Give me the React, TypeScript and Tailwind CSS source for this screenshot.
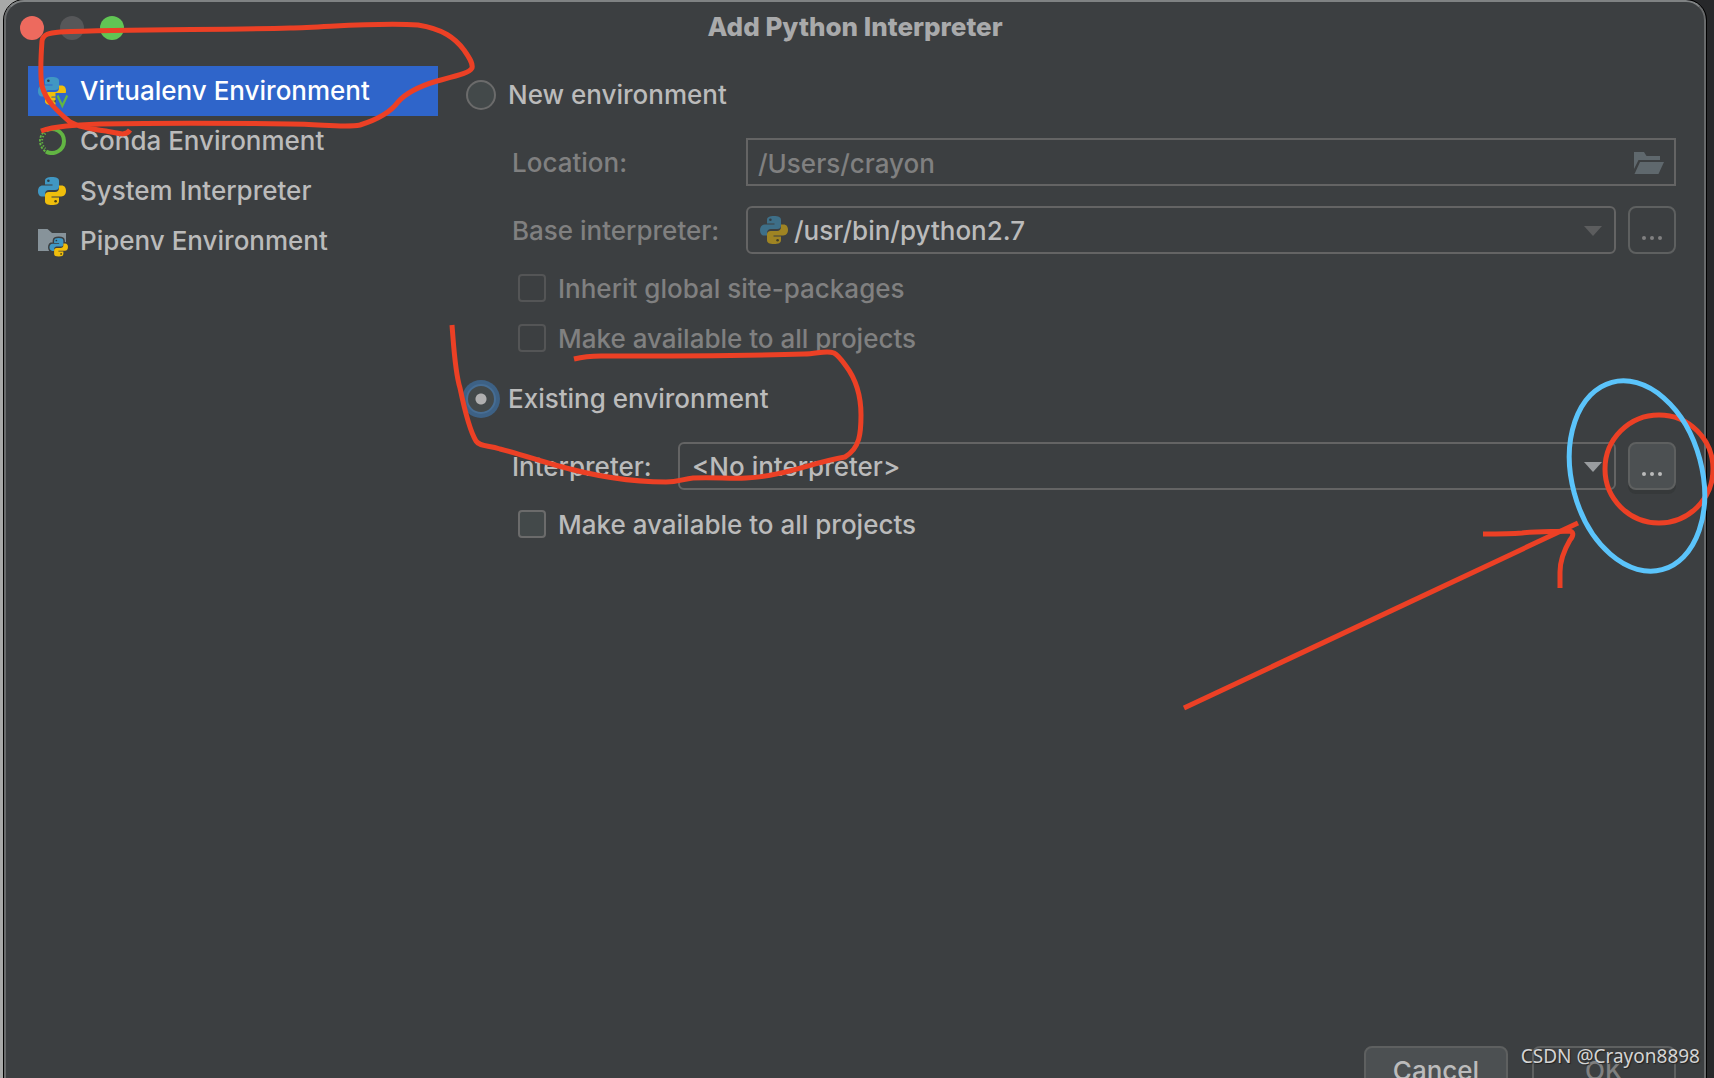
import type { ReactNode } from "react";

const BLUE_HALF =
  "M14 0C9.5 0 7 1 7 4V7.5H14.5V8.6H4.8C1.6 8.6 0 11 0 14.2S1.6 19.6 4.4 19.6H7V17C7 14.2 8.6 13 11 13H17.2C19.6 13 21 11.6 21 9.4V4C21 1 18.5 0 14 0Z";

function PythonShape() {
  return (
    <>
      <path d={BLUE_HALF} fill="#4097c3" />
      <path d={BLUE_HALF} fill="#f0be0c" transform="rotate(180 14 14)" />
      <circle cx="10.4" cy="3.8" r="1.3" fill="#2b3d48" />
      <circle cx="17.6" cy="24.2" r="1.3" fill="#4a3f12" />
    </>
  );
}

function PythonIcon({ className = "" }: { className?: string }) {
  return (
    <svg viewBox="0 0 28 28" className={`size-7 shrink-0 ${className}`} aria-hidden="true">
      <PythonShape />
    </svg>
  );
}

function VirtualenvIcon() {
  return (
    <svg viewBox="0 0 28 28" className="size-7 shrink-0 overflow-visible" aria-hidden="true">
      <PythonShape />
      <path d="M17.5 16H30V31H17.5Z" fill="#2f65ca" />
      <path d="M13.5 20.5H17M13.5 24H17" stroke="#9a8a3a" strokeWidth="1" />
      <path d="M19.5 18.5L24.3 29L29.2 18.5" fill="none" stroke="#62b543" strokeWidth="2.2" />
    </svg>
  );
}

function CondaIcon() {
  return (
    <svg viewBox="0 0 28 28" className="size-7 shrink-0" aria-hidden="true">
      <path d="M8 3.6A12 12 0 1 1 8 24.4" fill="none" stroke="#62b543" strokeWidth="4" />
      <path d="M8.5 3A12.5 12.5 0 0 0 8.5 25" fill="none" stroke="#62b543" strokeWidth="1.8" strokeDasharray="2.4 1.4" />
      <path d="M7.5 6.5A10 10 0 0 0 7.5 21.5" fill="none" stroke="#62b543" strokeWidth="1.8" strokeDasharray="1.4 1.8" />
    </svg>
  );
}

function PipenvIcon() {
  return (
    <svg viewBox="0 0 28 28" className="size-7 shrink-0 overflow-visible" aria-hidden="true">
      <path d="M0 2H9.5L14 6H28V24H0Z" fill="#87939a" />
      <g transform="translate(11.5 11) scale(.66)">
        <path d={BLUE_HALF} fill="#3c3f41" stroke="#3c3f41" strokeWidth="4.5" />
        <path d={BLUE_HALF} fill="#3c3f41" stroke="#3c3f41" strokeWidth="4.5" transform="rotate(180 14 14)" />
        <PythonShape />
      </g>
    </svg>
  );
}

function FolderIcon() {
  return (
    <svg viewBox="0 0 30 22" className="h-[22px] w-[30px]" fill="#5f686d" aria-hidden="true">
      <path d="M0 0H10L12.5 4H26V8H4.5L0 17Z" />
      <path d="M6 10H30L24.5 22H0.5Z" />
    </svg>
  );
}

function Arrow({ className }: { className: string }) {
  return (
    <svg
      viewBox="0 0 18 10"
      className={`pointer-events-none absolute top-5 right-3.5 h-2.5 w-[18px] ${className}`}
      aria-hidden="true"
    >
      <path d="M0 0H18L9 10Z" fill="currentColor" />
    </svg>
  );
}

function Dots() {
  return (
    <svg viewBox="0 0 20 4" className="mt-4 h-1 w-5" fill="currentColor" aria-hidden="true">
      <circle cx="2" cy="2" r="2" />
      <circle cx="10" cy="2" r="2" />
      <circle cx="18" cy="2" r="2" />
    </svg>
  );
}

function NavItem({ icon, label, selected = false }: { icon: ReactNode; label: string; selected?: boolean }) {
  return (
    <li>
      <button
        type="button"
        className={`flex h-[50px] w-full items-center gap-3.5 px-2.5 text-left ${selected ? "bg-[#2f65ca] text-white" : "text-[#bbbbbb]"}`}
      >
        {icon}
        {label}
      </button>
    </li>
  );
}

function CheckRow({ id, label, disabled = false }: { id: string; label: string; disabled?: boolean }) {
  return (
    <div className={`flex h-[50px] items-center gap-3 pl-[52px] ${disabled ? "text-[#808080]" : ""}`}>
      <input
        id={id}
        type="checkbox"
        disabled={disabled}
        className="size-7 shrink-0 appearance-none rounded border-2 border-[#6b6b6b] bg-[#43494a] disabled:border-[#545556] disabled:bg-transparent"
      />
      <label htmlFor={id} className="pt-0.5">{label}</label>
    </div>
  );
}

function Annotations() {
  return (
    <>
      <svg className="pointer-events-none absolute top-0 left-0 h-[500px] w-[900px]" fill="none" stroke="#ec4025" strokeWidth="5" aria-hidden="true">
        <path d="M130 130C126 136 121 134 106 131C90 129 79 127 70 122C57 111 46 101 42 86C40 75 41 55 42 41C43 34 49 33 60 32C130 29 220 30 290 28C330 27 380 22 418 25C443 29 455 38 464 50C471 60 473 64 472 68C469 73 460 75 437 81C417 87 405 94 398 102C390 113 376 120 360 125C345 128 320 124 290 124C230 123 150 123 100 124C75 125 55 126 41 131" />
        <path d="M452 325C454 350 455 372 460 388C465 412 470 431 476 441C480 447 488 445 500 449C520 454 540 461 555 465C590 475 625 482 666 482C678 482 683 479 693 478C715 477 730 479 746 478C785 476 810 463 845 457C860 448 861 433 861 415C861 395 855 378 846 366C841 359 838 355 834 353C826 350 817 354 804 354C740 356 670 356 601 356C590 356 582 357 574 359" />
      </svg>
      <svg className="pointer-events-none absolute top-0 right-0 h-[720px] w-[564px]" fill="none" stroke="#ec4025" strokeWidth="5" aria-hidden="true">
        <path d="M34 708L428 523" />
        <path d="M333 534C350 534 360 534 372 533C390 531 405 532 418 531C424 531 424 535 420 540C413 552 410 563 410 572V588" />
        <circle cx="509" cy="469" r="54" />
        <ellipse cx="487" cy="476" rx="97" ry="65" transform="rotate(75 487 476)" stroke="#5bc4fb" />
      </svg>
    </>
  );
}

export default function App() {
  return (
    <div className="relative h-screen overflow-hidden bg-linear-to-r from-[#a8a9a8] from-50% to-[#27282a] to-50% pr-2 pl-1 font-[Inter,'Liberation_Sans',sans-serif] text-[26px] leading-8 font-medium text-[#bbbbbb]">
      <main className="flex h-[calc(100vh+40px)] flex-col rounded-t-[20px] border-2 border-[#686a6b] border-t-[#7f8283] bg-[#3c3f41] outline outline-black">
        <header className="grid h-[52px] grid-cols-[1fr_auto_1fr] items-center px-3.5">
          <div className="flex gap-4">
            <button type="button" aria-label="Close" className="size-6 rounded-full bg-[#ed6a5e]" />
            <button type="button" aria-label="Minimize" className="size-6 rounded-full bg-[#565759]" />
            <button type="button" aria-label="Zoom" className="size-6 rounded-full bg-[#61c554]" />
          </div>
          <h1 className="pb-0.5 font-extrabold text-[#a9aaab]">Add Python Interpreter</h1>
        </header>

        <div className="flex flex-1 gap-7 pt-3 pr-7 pl-[22px]">
          <nav className="w-[410px] shrink-0">
            <ul>
              <NavItem icon={<VirtualenvIcon />} label="Virtualenv Environment" selected />
              <NavItem icon={<CondaIcon />} label="Conda Environment" />
              <NavItem icon={<PythonIcon />} label="System Interpreter" />
              <NavItem icon={<PipenvIcon />} label="Pipenv Environment" />
            </ul>
          </nav>

          <form className="min-w-0 flex-1 pt-1">
            <div className="flex h-[50px] items-center gap-3">
              <input
                id="new"
                name="environment"
                type="radio"
                className="size-[30px] shrink-0 appearance-none rounded-full border-2 border-[#6b6b6b] bg-[#43494a]"
              />
              <label htmlFor="new">New environment</label>
            </div>

            <div className="mt-[18px] flex items-center pl-[46px] text-[#808080]">
              <label htmlFor="location" className="w-[234px] shrink-0 pt-0.5">Location:</label>
              <div className="relative flex-1">
                <input
                  id="location"
                  disabled
                  defaultValue="/Users/crayon"
                  className="block h-12 w-full border-2 border-[#646464] bg-transparent pt-0.5 pl-2.5"
                />
                <button type="button" disabled aria-label="Browse" className="absolute top-3.5 right-3 block">
                  <FolderIcon />
                </button>
              </div>
            </div>

            <div className="mt-5 mb-[9px] flex items-center pl-[46px]">
              <label htmlFor="base" className="w-[234px] shrink-0 pt-0.5 text-[#808080]">Base interpreter:</label>
              <div className="relative flex-1">
                <select id="base" disabled className="block h-12 w-full appearance-none rounded-md border-2 border-[#646464] bg-transparent pt-0.5 pl-[46px] text-[#bbbbbb] opacity-100">
                  <option>/usr/bin/python2.7</option>
                </select>
                <PythonIcon className="absolute top-2.5 left-3.5 opacity-55" />
                <Arrow className="text-[#5c5d5e]" />
              </div>
              <button type="button" disabled aria-label="Browse base interpreters" className="ml-3 grid size-12 place-items-center rounded-lg border-2 border-[#5e6060] text-[#808080]">
                <Dots />
              </button>
            </div>

            <CheckRow id="inherit" label="Inherit global site-packages" disabled />
            <CheckRow id="available-new" label="Make available to all projects" disabled />

            <div className="mt-[11px] flex h-[50px] items-center gap-3">
              <input
                id="existing"
                name="environment"
                type="radio"
                defaultChecked
                className="size-[30px] shrink-0 appearance-none rounded-full border-2 border-[#466d94] bg-[#43494a] bg-[radial-gradient(circle,#b0b0b0_5px,transparent_6px)] ring-4 ring-[#3d6185]"
              />
              <label htmlFor="existing">Existing environment</label>
            </div>

            <div className="mt-[18px] mb-[9px] flex items-center pl-[46px]">
              <label htmlFor="interpreter" className="w-[166px] shrink-0 pt-0.5">Interpreter:</label>
              <div className="relative flex-1">
                <select id="interpreter" className="block h-12 w-full appearance-none rounded-md border-2 border-[#646464] bg-transparent pt-0.5 pl-3">
                  <option>&lt;No interpreter&gt;</option>
                </select>
                <Arrow className="text-[#9a9da0]" />
              </div>
              <button type="button" aria-label="Browse interpreters" className="ml-3 grid size-12 place-items-center rounded-lg border-2 border-[#5e6060] bg-[#4c5052] shadow-[0_4px_0_#36393a]">
                <Dots />
              </button>
            </div>

            <CheckRow id="available-existing" label="Make available to all projects" />
          </form>
        </div>

        <footer className="flex justify-end gap-6 pr-7 pb-[22px]">
          <button type="button" className="h-12 w-36 rounded-lg border-2 border-[#5e6060] bg-[#4c5052] pt-0.5">Cancel</button>
          <button type="button" disabled className="h-12 w-36 rounded-lg border-2 border-[#5e6060] pt-0.5 text-[#808080]">OK</button>
        </footer>
      </main>

      <Annotations />
      <p className="absolute right-3.5 bottom-2 font-['Noto_Sans',sans-serif] text-[19px] leading-7 font-normal text-[#d4d4d4] [text-shadow:1px_1px_1px_#222]">
        CSDN @Crayon8898
      </p>
    </div>
  );
}
